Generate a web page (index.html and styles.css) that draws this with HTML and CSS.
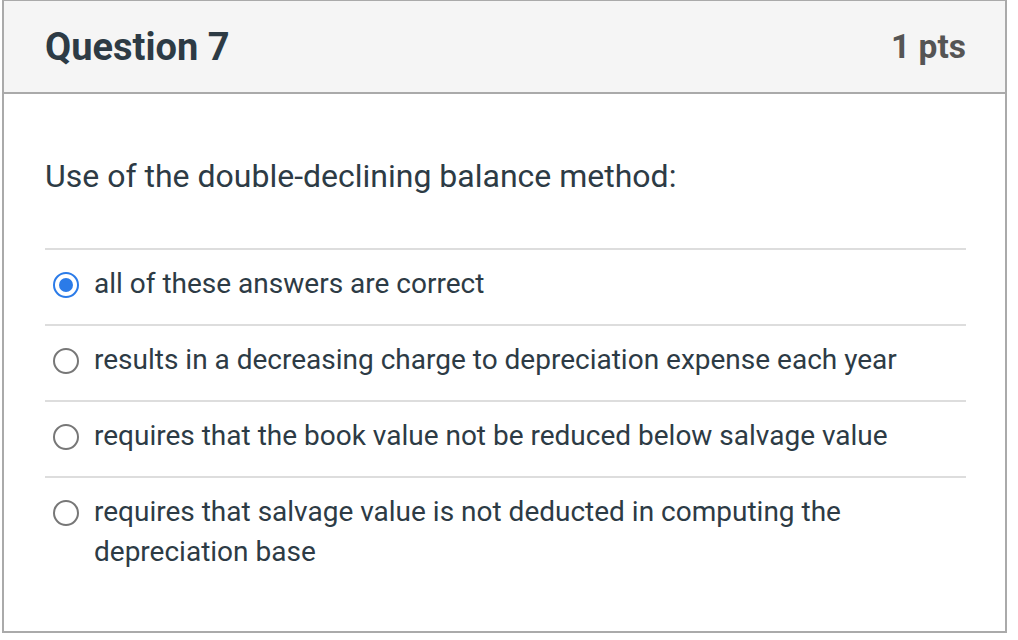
FILE: index.html
```html
<!DOCTYPE html>
<html>
<head>
<meta charset="utf-8">
<link rel="stylesheet" href="styles.css">
</head>
<body>
<div class="question">
  <div class="q-header">
    <h2 class="q-title">Question 7</h2>
    <div class="q-points">1 pts</div>
  </div>
  <div class="q-body">
    <p class="q-text">Use of the double-declining balance method:</p>
    <div class="answers">
      <label class="answer">
        <span class="radio checked"></span>
        <span class="answer-text">all of these answers are correct</span>
      </label>
      <label class="answer">
        <span class="radio"></span>
        <span class="answer-text">results in a decreasing charge to depreciation expense each year</span>
      </label>
      <label class="answer">
        <span class="radio"></span>
        <span class="answer-text">requires that the book value not be reduced below salvage value</span>
      </label>
      <label class="answer">
        <span class="radio"></span>
        <span class="answer-text">requires that salvage value is not deducted in computing the depreciation base</span>
      </label>
    </div>
  </div>
</div>
</body>
</html>
```

FILE: styles.css
```css
html, body {
  margin: 0;
  padding: 0;
  background: #ffffff;
}

body {
  font-family: Roboto, "Liberation Sans", Arial, sans-serif;
  color: #2d3b45;
}

.question {
  box-sizing: border-box;
  margin-left: 2px;
  width: 1005px;
  height: 633px;
  border: 2px solid #aaaaaa;
  border-top-width: 1px;
}

.q-header {
  box-sizing: border-box;
  height: 93px;
  background: #f5f5f5;
  border-bottom: 2px solid #aaaaaa;
  display: flex;
  align-items: center;
  justify-content: space-between;
  padding: 0 39px 0 41px;
}

.q-title {
  margin: 0;
  font-size: 38px;
  font-weight: 700;
  line-height: 40px;
  color: #2d3b45;
}

.q-points {
  font-size: 33.5px;
  font-weight: 700;
  line-height: 40px;
  color: #555555;
}

.q-body {
  padding: 62px 39px 0 41px;
}

.q-text {
  margin: 0 0 52px 0;
  font-size: 32px;
  line-height: 40px;
}

.answers {
  display: flex;
  flex-direction: column;
}

.answer {
  display: flex;
  align-items: flex-start;
  gap: 15px;
  border-top: 2px solid #dddddd;
  padding: 14px 0 20px 8px;
  font-size: 28px;
  line-height: 40px;
}

.radio {
  box-sizing: border-box;
  flex: none;
  width: 26px;
  height: 26px;
  margin-top: 8px;
  border: 2px solid #777777;
  border-radius: 50%;
  background: #ffffff;
  position: relative;
}

.radio.checked {
  border-color: #2b7be8;
}

.radio.checked::after {
  content: "";
  position: absolute;
  left: 4px;
  top: 4px;
  width: 14px;
  height: 14px;
  border-radius: 50%;
  background: #2b7be8;
}

.answer-text {
  flex: 1;
}
```
